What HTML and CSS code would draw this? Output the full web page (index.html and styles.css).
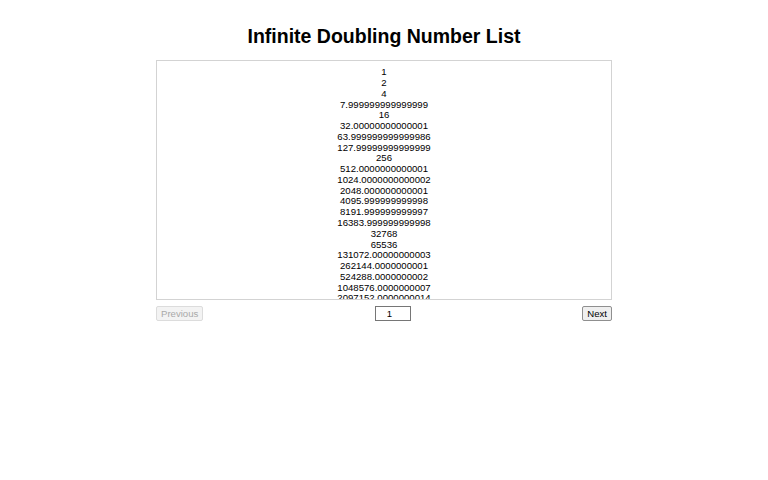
FILE: index.html
```html
<!DOCTYPE html>
<html>
<head>
<meta charset="utf-8">
<title>Infinite Doubling Number List</title>
<link rel="stylesheet" href="styles.css">
</head>
<body>
<div class="page">
  <h1 class="title">Infinite Doubling Number List</h1>
  <div class="list">
    <div class="item">1</div>
    <div class="item">2</div>
    <div class="item">4</div>
    <div class="item">7.999999999999999</div>
    <div class="item">16</div>
    <div class="item">32.00000000000001</div>
    <div class="item">63.999999999999986</div>
    <div class="item">127.99999999999999</div>
    <div class="item">256</div>
    <div class="item">512.0000000000001</div>
    <div class="item">1024.0000000000002</div>
    <div class="item">2048.000000000001</div>
    <div class="item">4095.999999999998</div>
    <div class="item">8191.999999999997</div>
    <div class="item">16383.999999999998</div>
    <div class="item">32768</div>
    <div class="item">65536</div>
    <div class="item">131072.00000000003</div>
    <div class="item">262144.0000000001</div>
    <div class="item">524288.0000000002</div>
    <div class="item">1048576.0000000007</div>
    <div class="item">2097152.0000000014</div>
  </div>
  <div class="controls">
    <button class="btn" disabled>Previous</button>
    <input class="page-input" type="text" value="1">
    <button class="btn">Next</button>
  </div>
</div>
</body>
</html>
```
FILE: styles.css
```css
html, body {
  margin: 0;
  padding: 0;
  background: #ffffff;
}
body {
  font-family: "Liberation Sans", Arial, sans-serif;
  color: #000000;
}
.page {
  width: 456px;
  margin: 0 auto;
}
.title {
  margin: 0;
  padding: 25px 0 13px;
  font-size: 19.5px;
  font-weight: bold;
  line-height: 22px;
  text-align: center;
}
.list {
  box-sizing: border-box;
  height: 240px;
  border: 1px solid #d3d3d3;
  padding-top: 6.3px;
  overflow: hidden;
  text-align: center;
  font-size: 9.6px;
  line-height: 10.76px;
}
.controls {
  display: flex;
  justify-content: space-between;
  align-items: center;
  margin-top: 6px;
}
.btn {
  box-sizing: border-box;
  height: 15px;
  margin: 0;
  padding: 0 4px;
  font-family: "Liberation Sans", Arial, sans-serif;
  font-size: 9.6px;
  line-height: 13px;
  color: #000000;
  background: #efefef;
  border: 1px solid #8f8f8f;
  border-radius: 2px;
}
.btn:disabled {
  color: #a9a9a9;
  background: #f3f3f3;
  border-color: #dcdcdc;
}
.page-input {
  box-sizing: border-box;
  width: 36px;
  height: 15px;
  margin: 0;
  padding: 0 0 0 11px;
  font-family: "Liberation Sans", Arial, sans-serif;
  font-size: 9.6px;
  color: #000000;
  background: #ffffff;
  border: 1px solid #767676;
  border-radius: 0;
}
```
